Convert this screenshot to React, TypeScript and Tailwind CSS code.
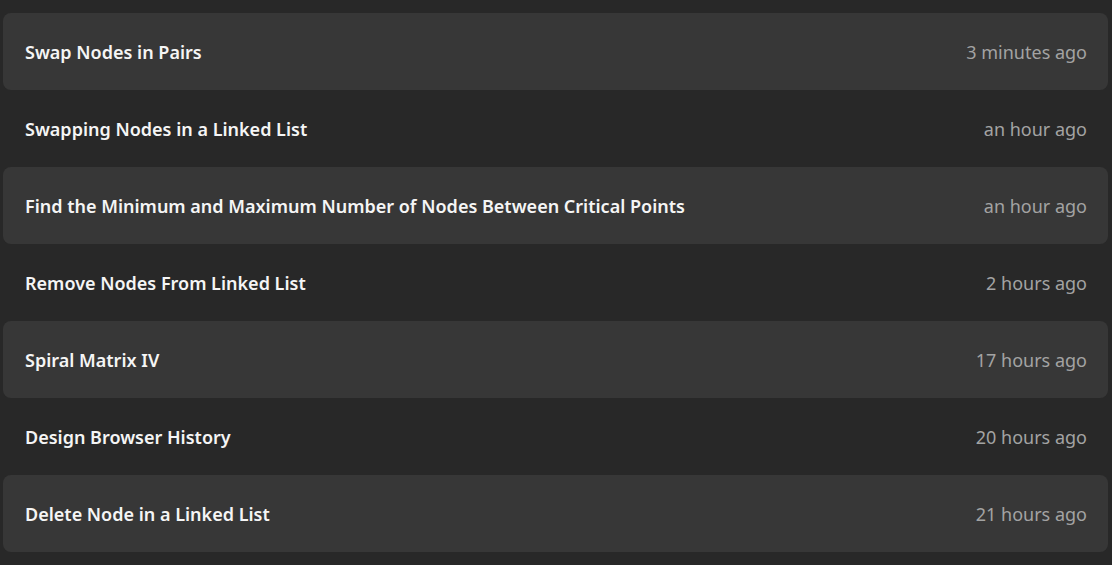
import React from 'react';

type Item = { title: string; time: string };

const items: Item[] = [
  { title: 'Swap Nodes in Pairs', time: '3 minutes ago' },
  { title: 'Swapping Nodes in a Linked List', time: 'an hour ago' },
  { title: 'Find the Minimum and Maximum Number of Nodes Between Critical Points', time: 'an hour ago' },
  { title: 'Remove Nodes From Linked List', time: '2 hours ago' },
  { title: 'Spiral Matrix IV', time: '17 hours ago' },
  { title: 'Design Browser History', time: '20 hours ago' },
  { title: 'Delete Node in a Linked List', time: '21 hours ago' },
];

const App: React.FC = () => {
  return (
    <div
      className="min-h-screen bg-[#282828] pt-[13px] pb-[13px] pl-[3px] pr-[4px]"
      style={{ fontFamily: '"Noto Sans", "Open Sans", sans-serif' }}
    >
      <ul className="flex flex-col">
        {items.map((item, i) => (
          <li
            key={item.title}
            className={
              'flex h-[77px] items-center justify-between rounded-lg pt-[2px] pl-[22px] pr-[21px] ' +
              (i % 2 === 0 ? 'bg-[#373737]' : '')
            }
          >
            <span className="text-[18px] font-semibold text-[#f5f5f5]">{item.title}</span>
            <span className="text-[18px] text-[#a3a3a3]">{item.time}</span>
          </li>
        ))}
      </ul>
    </div>
  );
};

export default App;
